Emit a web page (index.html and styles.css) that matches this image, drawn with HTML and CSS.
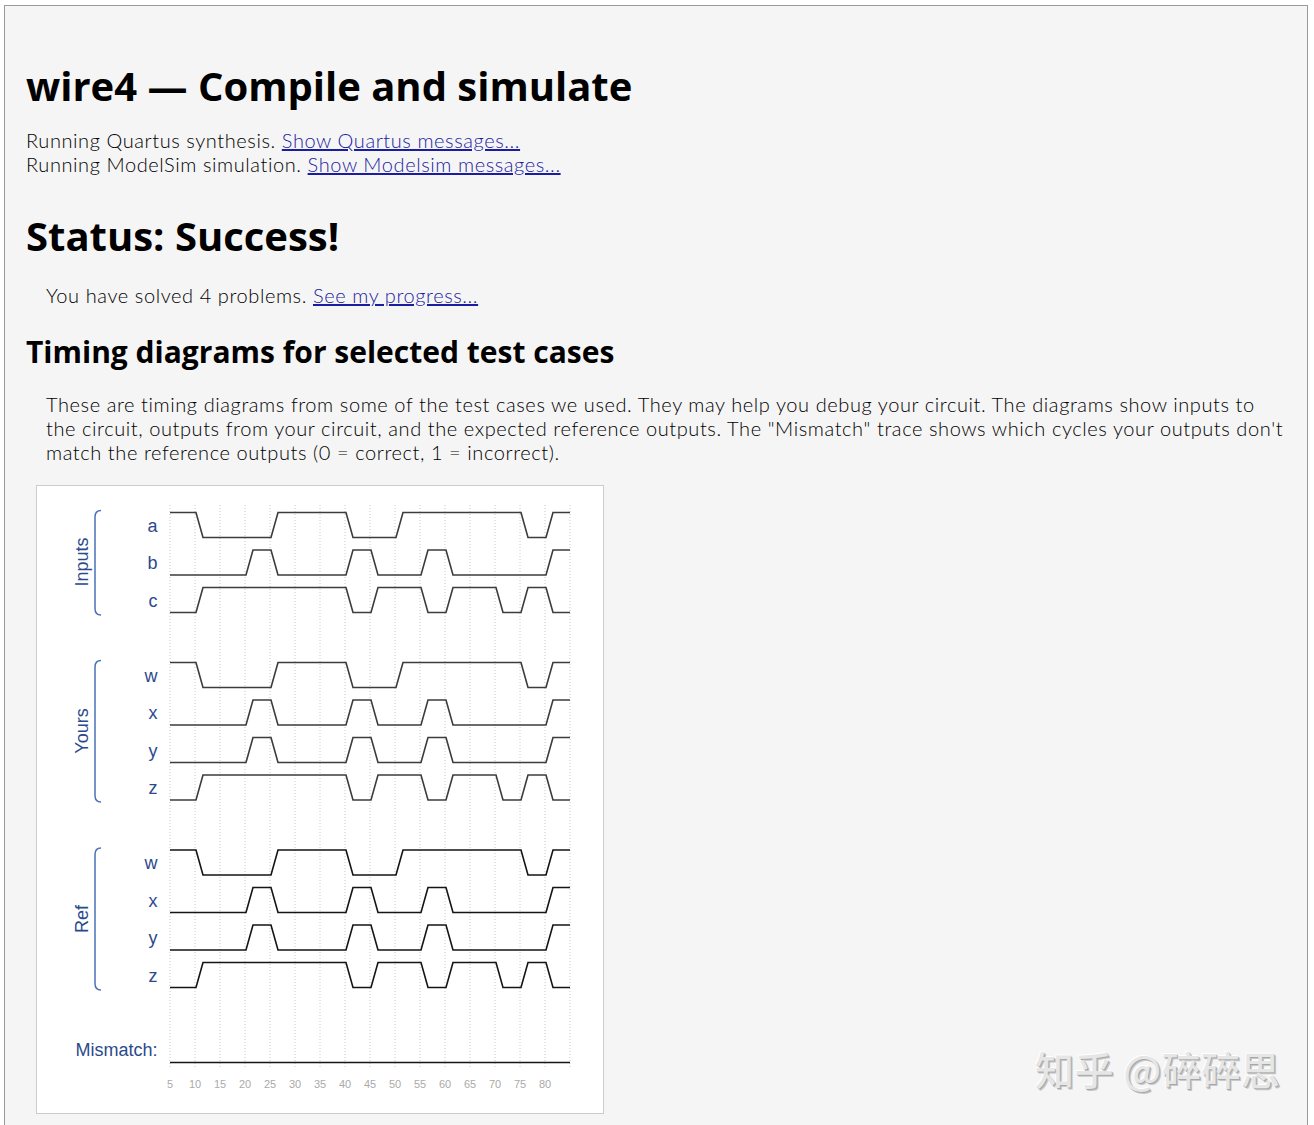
FILE: index.html
```html
<!DOCTYPE html>
<html>
<head>
<meta charset="utf-8">
<title>wire4 — Compile and simulate</title>
<link rel="stylesheet" href="styles.css">
</head>
<body>
<div class="frame">
  <h1 class="title">wire4 — Compile and simulate</h1>
  <p class="run">Running Quartus synthesis. <a href="#">Show Quartus messages...</a><br>Running ModelSim simulation. <a href="#">Show Modelsim messages...</a></p>
  <h1 class="status">Status: Success!</h1>
  <p class="indent solved">You have solved 4 problems. <a href="#">See my progress...</a></p>
  <h2 class="sub">Timing diagrams for selected test cases</h2>
  <p class="indent desc">These are timing diagrams from some of the test cases we used. They may help you debug your circuit. The diagrams show inputs to the circuit, outputs from your circuit, and the expected reference outputs. The "Mismatch" trace shows which cycles your outputs don't match the reference outputs (0 = correct, 1 = incorrect).</p>
  <div class="wave">
    <svg class="wave-svg" width="566" height="627" viewBox="37 486 566 627" xmlns="http://www.w3.org/2000/svg">
      <defs>
        <path id="sa" d="M170 0 H196 L203 25 H271 L278 0 H346 L353 25 H396 L403 0 H521 L528 25 H546 L553 0 H570"/>
        <path id="sb" d="M170 25 H246 L253 0 H271 L278 25 H346 L353 0 H371 L378 25 H421 L428 0 H446 L453 25 H546 L553 0 H570"/>
        <path id="sc" d="M170 25 H196 L203 0 H346 L353 25 H371 L378 0 H421 L428 25 H446 L453 0 H496 L503 25 H521 L528 0 H546 L553 25 H570"/>
      </defs>
      <g class="grid">
        <line x1="170" y1="505" x2="170" y2="1068"/>
        <line x1="195" y1="505" x2="195" y2="1068"/>
        <line x1="220" y1="505" x2="220" y2="1068"/>
        <line x1="245" y1="505" x2="245" y2="1068"/>
        <line x1="270" y1="505" x2="270" y2="1068"/>
        <line x1="295" y1="505" x2="295" y2="1068"/>
        <line x1="320" y1="505" x2="320" y2="1068"/>
        <line x1="345" y1="505" x2="345" y2="1068"/>
        <line x1="370" y1="505" x2="370" y2="1068"/>
        <line x1="395" y1="505" x2="395" y2="1068"/>
        <line x1="420" y1="505" x2="420" y2="1068"/>
        <line x1="445" y1="505" x2="445" y2="1068"/>
        <line x1="470" y1="505" x2="470" y2="1068"/>
        <line x1="495" y1="505" x2="495" y2="1068"/>
        <line x1="520" y1="505" x2="520" y2="1068"/>
        <line x1="545" y1="505" x2="545" y2="1068"/>
        <line x1="570" y1="505" x2="570" y2="1068"/>
      </g>
      <g class="sig sig-in">
        <use href="#sa" y="512.5"/>
        <use href="#sb" y="550"/>
        <use href="#sc" y="587.5"/>
        <use href="#sa" y="662.5"/>
        <use href="#sb" y="700"/>
        <use href="#sb" y="737.5"/>
        <use href="#sc" y="775"/>
      </g>
      <g class="sig sig-ref">
        <use href="#sa" y="850"/>
        <use href="#sb" y="887.5"/>
        <use href="#sb" y="925"/>
        <use href="#sc" y="962.5"/>
        <path d="M170 1062.5 H570"/>
      </g>
      <g class="brace">
        <path d="M101 510.5 Q95 510.5 95 517 V608.5 Q95 615 101 615"/>
        <path d="M101 660.5 Q95 660.5 95 667 V795.5 Q95 802 101 802"/>
        <path d="M101 848 Q95 848 95 854.5 V983.5 Q95 990 101 990"/>
      </g>
      <g class="lbl">
        <text x="157.5" y="531.5">a</text>
        <text x="157.5" y="569">b</text>
        <text x="157.5" y="606.5">c</text>
        <text x="157.5" y="681.5">w</text>
        <text x="157.5" y="719">x</text>
        <text x="157.5" y="756.5">y</text>
        <text x="157.5" y="794">z</text>
        <text x="157.5" y="869">w</text>
        <text x="157.5" y="906.5">x</text>
        <text x="157.5" y="944">y</text>
        <text x="157.5" y="981.5">z</text>
        <text x="157.5" y="1056">Mismatch:</text>
      </g>
      <g class="grp">
        <text x="88" y="562" transform="rotate(-90 88 562)">Inputs</text>
        <text x="88" y="731" transform="rotate(-90 88 731)">Yours</text>
        <text x="88" y="919" transform="rotate(-90 88 919)">Ref</text>
      </g>
      <g class="ticks">
        <text x="170" y="1088">5</text>
        <text x="195" y="1088">10</text>
        <text x="220" y="1088">15</text>
        <text x="245" y="1088">20</text>
        <text x="270" y="1088">25</text>
        <text x="295" y="1088">30</text>
        <text x="320" y="1088">35</text>
        <text x="345" y="1088">40</text>
        <text x="370" y="1088">45</text>
        <text x="395" y="1088">50</text>
        <text x="420" y="1088">55</text>
        <text x="445" y="1088">60</text>
        <text x="470" y="1088">65</text>
        <text x="495" y="1088">70</text>
        <text x="520" y="1088">75</text>
        <text x="545" y="1088">80</text>
      </g>
    </svg>
  </div>
  <div class="watermark">知乎 @碎碎思</div>
</div>
</body>
</html>
```

FILE: styles.css
```css
html, body {
  margin: 0;
  padding: 0;
  background: #ffffff;
}

body {
  font-family: "Lato", "Open Sans", sans-serif;
  font-weight: 300;
  letter-spacing: 0.585px;
  color: #000000;
}

.frame {
  position: relative;
  display: flow-root;
  margin: 5px 6px 0 4px;
  border: 1px solid #9a9a9a;
  border-bottom: none;
  background: #f5f5f5;
  padding: 0 21px 40px 21px;
}

a {
  color: #1c1ca0;
  text-decoration: underline;
}

.title,
.status {
  font-family: "Open Sans", sans-serif;
  font-weight: 700;
  letter-spacing: 0;
  font-size: 40px;
  line-height: 48px;
  margin: 0;
  color: #000;
}

.title {
  margin-top: 56px;
}

.run {
  margin: 18px 0 0 0;
  font-size: 20px;
  line-height: 24px;
}

.status {
  margin-top: 36px;
}

.indent {
  margin-left: 20px;
}

.solved {
  margin-top: 23px;
  margin-bottom: 0;
  font-size: 20px;
  line-height: 24px;
}

.sub {
  font-family: "Open Sans", sans-serif;
  font-weight: 700;
  letter-spacing: 0;
  font-size: 30px;
  line-height: 36px;
  margin: 27px 0 0 0;
  color: #000;
}

.desc {
  margin-top: 22px;
  margin-bottom: 0;
  font-size: 20px;
  line-height: 24px;
}

.wave {
  margin: 21px 0 0 10px;
  width: 566px;
  height: 627px;
  border: 1px solid #cccccc;
  background: #ffffff;
  letter-spacing: 0;
}

.wave-svg {
  display: block;
}

.grid line {
  stroke: #c8c8c8;
  stroke-width: 1;
  stroke-dasharray: 1 2;
}

.sig use,
.sig path {
  fill: none;
  stroke-width: 1.6;
  stroke-linejoin: miter;
}

.sig-in {
  stroke: #3c3c3c;
  fill: none;
}

.sig-ref {
  stroke: #151515;
  fill: none;
}

.brace path {
  fill: none;
  stroke: #4a72b8;
  stroke-width: 1.5;
}

.lbl text {
  font-family: "Liberation Sans", Arial, sans-serif;
  font-weight: 400;
  font-size: 18px;
  fill: #2b4a8c;
  text-anchor: end;
}

.grp text {
  font-family: "Liberation Sans", Arial, sans-serif;
  font-weight: 400;
  font-size: 18px;
  fill: #2b4a8c;
  text-anchor: middle;
}

.ticks text {
  font-family: "Liberation Sans", Arial, sans-serif;
  font-weight: 400;
  font-size: 11px;
  fill: #aaaaaa;
  text-anchor: middle;
}

.watermark {
  position: absolute;
  left: 1030px;
  top: 1043px;
  font-family: "Noto Sans CJK SC", sans-serif;
  font-size: 39px;
  line-height: 39px;
  font-weight: 500;
  letter-spacing: 0.5px;
  color: #e6e6e6;
  text-shadow: 1px 1px 0 #a8a8a8, 2px 2px 0 #c8c8c8, -1px -1px 0 #ffffff;
  white-space: nowrap;
}
```
